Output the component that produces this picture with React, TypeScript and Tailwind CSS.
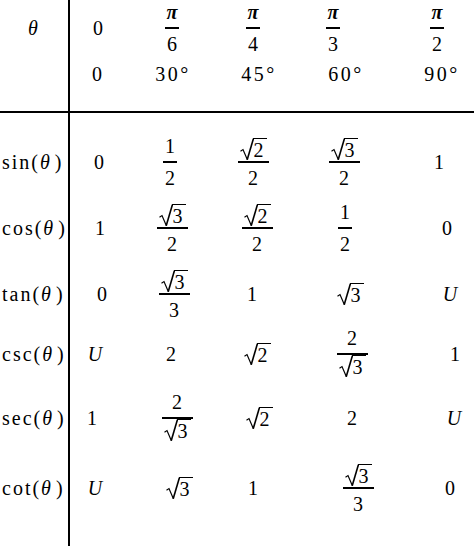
import React from 'react';

// radical sign + overbar drawn over the radicand
const Sqrt = ({ n }: { n: string }) => (
  <span className="inline-flex items-start">
    <svg width="14" height="23" viewBox="0 0 14 23" className="-mr-[1px]">
      <path d="M0.5 13.2 L3 11.6 L7.4 21.8" stroke="black" strokeWidth="1.2" fill="none" />
      <path d="M7.2 21.8 L13.4 0.8" stroke="black" strokeWidth="1.6" fill="none" />
    </svg>
    <span className="border-t-[1.5px] border-black leading-[22px] pl-[1px] pr-[3px]">{n}</span>
  </span>
);

const Frac = ({ num, den }: { num: React.ReactNode; den: React.ReactNode }) => (
  <span className="inline-flex flex-col items-center">
    <span className="leading-[30px] h-[30px] flex items-end px-[2px]">{num}</span>
    <span className="h-[1.5px] w-full bg-black" />
    <span className="leading-[30px] h-[30px] flex items-start px-[2px]">{den}</span>
  </span>
);

const Pi = () => <span className="italic font-bold">π</span>;
const U = () => <span className="italic">U</span>;
const Deg = ({ v }: { v: string }) => (
  <span className="tracking-[2.5px]">
    {v}
    <span>°</span>
  </span>
);

const Label = ({ fn }: { fn: string }) => (
  <span className="tracking-[2px]">
    {fn}(<span className="italic">θ</span>
    <span className="ml-[3px]">)</span>
  </span>
);

type Cell = { col: string; row: string; nudge?: string; el: React.ReactNode };

const cells: Cell[] = [
  // header, first line
  { col: 'col-start-3', row: 'row-start-1', el: '0' },
  { col: 'col-start-4', row: 'row-start-1', nudge: 'mr-[2px]', el: <Frac num={<Pi />} den="6" /> },
  { col: 'col-start-5', row: 'row-start-1', nudge: 'mr-[4px]', el: <Frac num={<Pi />} den="4" /> },
  { col: 'col-start-6', row: 'row-start-1', nudge: 'mr-[24px]', el: <Frac num={<Pi />} den="3" /> },
  { col: 'col-start-7', row: 'row-start-1', el: <Frac num={<Pi />} den="2" /> },
  // header, degrees
  { col: 'col-start-3', row: 'row-start-2', nudge: 'mr-[2px]', el: '0' },
  { col: 'col-start-4', row: 'row-start-2', el: <Deg v="30" /> },
  { col: 'col-start-5', row: 'row-start-2', nudge: 'ml-[8px]', el: <Deg v="45" /> },
  { col: 'col-start-6', row: 'row-start-2', nudge: 'ml-[2px]', el: <Deg v="60" /> },
  { col: 'col-start-7', row: 'row-start-2', nudge: 'ml-[10px]', el: <Deg v="90" /> },

  // sin
  { col: 'col-start-3', row: 'row-start-6', nudge: 'ml-[2px]', el: '0' },
  { col: 'col-start-4', row: 'row-start-6', nudge: 'mr-[6px]', el: <Frac num="1" den="2" /> },
  { col: 'col-start-5', row: 'row-start-6', nudge: 'mr-[4px]', el: <Frac num={<Sqrt n="2" />} den="2" /> },
  { col: 'col-start-6', row: 'row-start-6', nudge: 'mr-[2px]', el: <Frac num={<Sqrt n="3" />} den="2" /> },
  { col: 'col-start-7', row: 'row-start-6', nudge: 'ml-[4px]', el: '1' },
  // cos
  { col: 'col-start-3', row: 'row-start-7', nudge: 'ml-[4px]', el: '1' },
  { col: 'col-start-4', row: 'row-start-7', nudge: 'mr-[2px]', el: <Frac num={<Sqrt n="3" />} den="2" /> },
  { col: 'col-start-5', row: 'row-start-7', nudge: 'ml-[4px]', el: <Frac num={<Sqrt n="2" />} den="2" /> },
  { col: 'col-start-6', row: 'row-start-7', el: <Frac num="1" den="2" /> },
  { col: 'col-start-7', row: 'row-start-7', nudge: 'ml-[20px]', el: '0' },
  // tan
  { col: 'col-start-3', row: 'row-start-8', nudge: 'ml-[8px]', el: '0' },
  { col: 'col-start-4', row: 'row-start-8', nudge: 'ml-[2px]', el: <Frac num={<Sqrt n="3" />} den="3" /> },
  { col: 'col-start-5', row: 'row-start-8', nudge: 'mr-[6px]', el: '1' },
  { col: 'col-start-6', row: 'row-start-8', nudge: 'ml-[10px]', el: <Sqrt n="3" /> },
  { col: 'col-start-7', row: 'row-start-8', nudge: 'ml-[26px]', el: <U /> },
  // csc
  { col: 'col-start-3', row: 'row-start-9', nudge: 'mr-[6px]', el: <U /> },
  { col: 'col-start-4', row: 'row-start-9', nudge: 'mr-[4px]', el: '2' },
  { col: 'col-start-5', row: 'row-start-9', nudge: 'ml-[4px]', el: <Sqrt n="2" /> },
  { col: 'col-start-6', row: 'row-start-9', nudge: 'ml-[14px]', el: <Frac num="2" den={<Sqrt n="3" />} /> },
  { col: 'col-start-7', row: 'row-start-9', nudge: 'ml-[36px]', el: '1' },
  // sec
  { col: 'col-start-3', row: 'row-start-10', nudge: 'mr-[12px]', el: '1' },
  { col: 'col-start-4', row: 'row-start-10', nudge: 'ml-[8px]', el: <Frac num="2" den={<Sqrt n="3" />} /> },
  { col: 'col-start-5', row: 'row-start-10', nudge: 'ml-[8px]', el: <Sqrt n="2" /> },
  { col: 'col-start-6', row: 'row-start-10', nudge: 'ml-[14px]', el: '2' },
  { col: 'col-start-7', row: 'row-start-10', nudge: 'ml-[34px]', el: <U /> },
  // cot
  { col: 'col-start-3', row: 'row-start-11', nudge: 'mr-[6px]', el: <U /> },
  { col: 'col-start-4', row: 'row-start-11', nudge: 'ml-[12px]', el: <Sqrt n="3" /> },
  { col: 'col-start-5', row: 'row-start-11', nudge: 'mr-[4px]', el: '1' },
  { col: 'col-start-6', row: 'row-start-11', nudge: 'ml-[26px]', el: <Frac num={<Sqrt n="3" />} den="3" /> },
  { col: 'col-start-7', row: 'row-start-11', nudge: 'ml-[26px]', el: '0' },
];

const labels: { fn: string; row: string }[] = [
  { fn: 'sin', row: 'row-start-6' },
  { fn: 'cos', row: 'row-start-7' },
  { fn: 'tan', row: 'row-start-8' },
  { fn: 'csc', row: 'row-start-9' },
  { fn: 'sec', row: 'row-start-10' },
  { fn: 'cot', row: 'row-start-11' },
];

export default function App() {
  return (
    <div className="w-[474px] h-[546px] bg-white text-black text-[20px] font-[family-name:Liberation_Serif,Times_New_Roman,serif] grid grid-cols-[68px_2px_56px_94px_70px_110px_1fr] grid-rows-[56px_36px_19px_2px_17px_64px_68px_64px_56px_72px_68px_1fr] overflow-hidden">
      {/* rules */}
      <div className="col-start-2 row-span-full bg-black" />
      <div className="row-start-4 col-span-full bg-black" />

      <div className="col-start-1 row-start-1 flex items-center justify-center italic mr-[2px]">θ</div>

      {labels.map((l) => (
        <div key={l.fn} className={`col-start-1 ${l.row} flex items-center pl-[2px]`}>
          <Label fn={l.fn} />
        </div>
      ))}

      {cells.map((c, i) => (
        <div key={i} className={`${c.col} ${c.row} flex items-center justify-center`}>
          <div className={`flex items-center ${c.nudge ?? ''}`}>{c.el}</div>
        </div>
      ))}
    </div>
  );
}
